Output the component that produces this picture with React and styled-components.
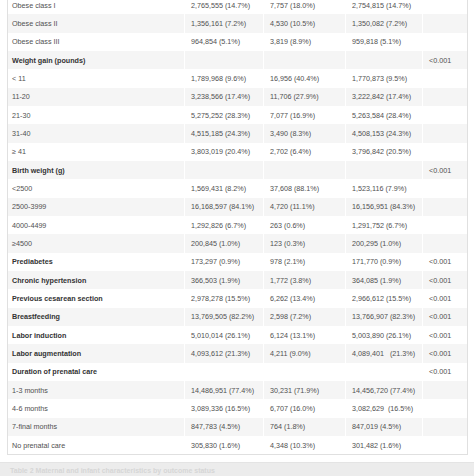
import React from "react";
import styled, { createGlobalStyle } from "styled-components";

const Global = createGlobalStyle`
  html, body { margin: 0; padding: 0; background: #fff; }
  body { font-family: "Liberation Sans", Arial, sans-serif; overflow: hidden; }
`;

const Page = styled.div`
  width: 474px;
  height: 476px;
  overflow: hidden;
  display: flex;
  flex-direction: column;
`;

const TableWrap = styled.div`
  margin: -5px 8px 0 7px;
`;

const Table = styled.table`
  width: 459px;
  table-layout: fixed;
  border-collapse: separate;
  border-spacing: 0;
  border: 1px solid #e0e0e0;
  font-size: 7.2px;
  color: #555;
`;

const Row = styled.tr`
  height: 18.33px;
  background: ${(p) => (p.$striped ? "#f5f5f5" : "#fff")};
`;

const Cell = styled.td`
  padding: 0 0 0 ${(p) => (p.$first ? "4px" : "6px")};
  vertical-align: middle;
  white-space: pre;
  border-right: 1px solid #fff;
  font-weight: ${(p) => (p.$bold ? "bold" : "normal")};
  color: ${(p) => (p.$bold ? "#333" : "#505050")};
  &:last-child { border-right: none; }
`;

const Footer = styled.div`
  margin-top: 7px;
  flex: 1;
  background: #ececec;
  border-top: 1px solid #e4e4e4;
  padding: 3px 10px 0;
  font-size: 7px;
  line-height: 9px;
  font-weight: bold;
  color: #d6d6d6;
`;

const rows = [
  ["Obese class I", "2,765,555 (14.7%)", "7,757 (18.0%)", "2,754,815 (14.7%)", ""],
  ["Obese class II", "1,356,161 (7.2%)", "4,530 (10.5%)", "1,350,082 (7.2%)", ""],
  ["Obese class III", "964,854 (5.1%)", "3,819 (8.9%)", "959,818 (5.1%)", ""],
  ["Weight gain (pounds)", "", "", "", "<0.001", true],
  ["< 11", "1,789,968 (9.6%)", "16,956 (40.4%)", "1,770,873 (9.5%)", ""],
  ["11-20", "3,238,566 (17.4%)", "11,706 (27.9%)", "3,222,842 (17.4%)", ""],
  ["21-30", "5,275,252 (28.3%)", "7,077 (16.9%)", "5,263,584 (28.4%)", ""],
  ["31-40", "4,515,185 (24.3%)", "3,490 (8.3%)", "4,508,153 (24.3%)", ""],
  ["≥ 41", "3,803,019 (20.4%)", "2,702 (6.4%)", "3,796,842 (20.5%)", ""],
  ["Birth weight (g)", "", "", "", "<0.001", true],
  ["<2500", "1,569,431 (8.2%)", "37,608 (88.1%)", "1,523,116 (7.9%)", ""],
  ["2500-3999", "16,168,597 (84.1%)", "4,720 (11.1%)", "16,156,951 (84.3%)", ""],
  ["4000-4499", "1,292,826 (6.7%)", "263 (0.6%)", "1,291,752 (6.7%)", ""],
  ["≥4500", "200,845 (1.0%)", "123 (0.3%)", "200,295 (1.0%)", ""],
  ["Prediabetes", "173,297 (0.9%)", "978 (2.1%)", "171,770 (0.9%)", "<0.001", true],
  ["Chronic hypertension", "366,503 (1.9%)", "1,772 (3.8%)", "364,085 (1.9%)", "<0.001", true],
  ["Previous cesarean section", "2,978,278 (15.5%)", "6,262 (13.4%)", "2,966,612 (15.5%)", "<0.001", true],
  ["Breastfeeding", "13,769,505 (82.2%)", "2,598 (7.2%)", "13,766,907 (82.3%)", "<0.001", true],
  ["Labor induction", "5,010,014 (26.1%)", "6,124 (13.1%)", "5,003,890 (26.1%)", "<0.001", true],
  ["Labor augmentation", "4,093,612 (21.3%)", "4,211 (9.0%)", "4,089,401   (21.3%)", "<0.001", true],
  ["Duration of prenatal care", "", "", "", "<0.001", true],
  ["1-3 months", "14,486,951 (77.4%)", "30,231 (71.9%)", "14,456,720 (77.4%)", ""],
  ["4-6 months", "3,089,336 (16.5%)", "6,707 (16.0%)", "3,082,629  (16.5%)", ""],
  ["7-final months", "847,783 (4.5%)", "764 (1.8%)", "847,019 (4.5%)", ""],
  ["No prenatal care", "305,830 (1.6%)", "4,348 (10.3%)", "301,482 (1.6%)", ""],
];

const widths = [177, 79, 82, 77, 44];

export default function App() {
  return (
    <>
      <Global />
      <Page>
        <TableWrap>
          <Table>
            <colgroup>
              {widths.map((w, i) => (
                <col key={i} style={{ width: w }} />
              ))}
            </colgroup>
            <tbody>
              {rows.map((r, i) => (
                <Row key={i} $striped={i % 2 === 1}>
                  <Cell $first $bold={r[5]}>{r[0]}</Cell>
                  <Cell>{r[1]}</Cell>
                  <Cell>{r[2]}</Cell>
                  <Cell>{r[3]}</Cell>
                  <Cell>{r[4]}</Cell>
                </Row>
              ))}
            </tbody>
          </Table>
        </TableWrap>
        <Footer>Table 2 Maternal and infant characteristics by outcome status</Footer>
      </Page>
    </>
  );
}
